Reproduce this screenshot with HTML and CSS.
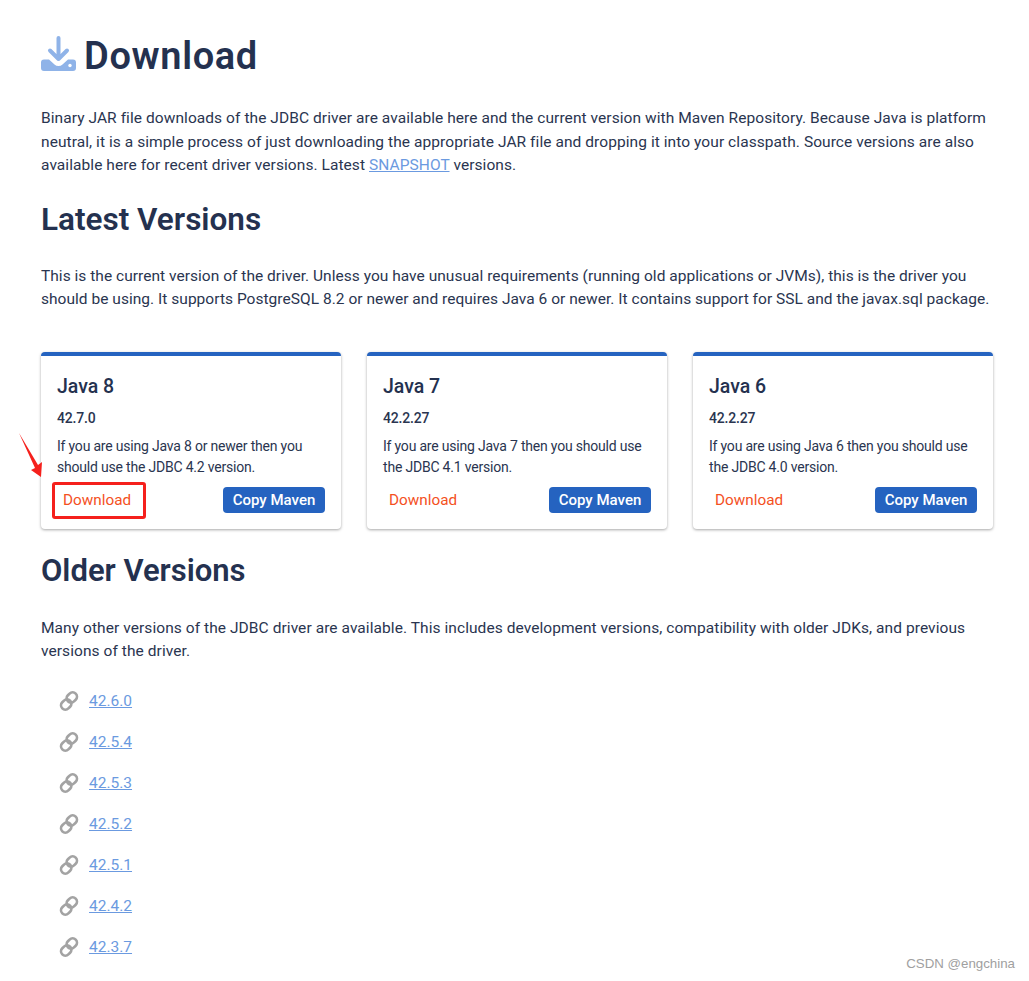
FILE: index.html
```html
<!DOCTYPE html>
<html lang="en">
<head>
    <meta charset="UTF-8">
    <meta name="viewport" content="width=device-width, initial-scale=1.0">
    <title>Download</title>
    <link rel="stylesheet" href="styles.css">
</head>
<body>
    <svg class="icon-defs" aria-hidden="true">
        <symbol id="chain" viewBox="0 0 20 20">
            <g fill="none" stroke="#a3a3a3" stroke-width="2.700">
                <rect x="7.300" y="2.200" width="11" height="8.600" rx="4.300" transform="rotate(-45 12.800 6.500)"/>
                <rect x="1.700" y="9.200" width="11" height="8.600" rx="4.300" transform="rotate(-45 7.200 13.500)"/>
            </g>
        </symbol>
    </svg>
    <div class="container">
        <h1 class="page-title">
            <svg class="title-icon" viewBox="0 0 35 35" width="35" height="35" aria-hidden="true">
                <path d="M17.500 2V23M9 14.500L17.500 23L26 14.500" fill="none" stroke="#8fb3e8" stroke-width="4" stroke-linecap="round" stroke-linejoin="round"/>
                <path d="M3 23.500h5l5.500 5a6 6 0 0 0 8 0l5.500-5h5a3 3 0 0 1 3 3V32a3 3 0 0 1-3 3H3a3 3 0 0 1-3-3v-5.500a3 3 0 0 1 3-3z" fill="#8fb3e8"/>
                <circle cx="29" cy="29.500" r="1.700" fill="#fff"/>
            </svg>
            Download
        </h1>
        <p class="intro">Binary JAR file downloads of the JDBC driver are available here and the current version with Maven Repository. Because Java is platform neutral, it is a simple process of just downloading the appropriate JAR file and dropping it into your classpath. Source versions are also available here for recent driver versions. Latest <a href="#">SNAPSHOT</a> versions.</p>

        <h2>Latest Versions</h2>
        <p class="current">This is the current version of the driver. Unless you have unusual requirements (running old applications or JVMs), this is the driver you should be using. It supports PostgreSQL 8.2 or newer and requires Java 6 or newer. It contains support for SSL and the javax.sql package.</p>

        <div class="cards">
            <div class="card">
                <h3>Java 8</h3>
                <div class="version">42.7.0</div>
                <p>If you are using Java 8 or newer then you should use the JDBC 4.2 version.</p>
                <div class="actions">
                    <a class="download" href="#">Download</a>
                    <button type="button">Copy Maven</button>
                </div>
                <span class="mark-box"></span>
                <svg class="mark-arrow" viewBox="0 0 26 46" width="26" height="46" aria-hidden="true">
                    <path d="M1 0L20 32L24 29L23 44L13 37L17 35z" fill="#f5201c"/>
                </svg>
            </div>
            <div class="card">
                <h3>Java 7</h3>
                <div class="version">42.2.27</div>
                <p>If you are using Java 7 then you should use the JDBC 4.1 version.</p>
                <div class="actions">
                    <a class="download" href="#">Download</a>
                    <button type="button">Copy Maven</button>
                </div>
            </div>
            <div class="card">
                <h3>Java 6</h3>
                <div class="version">42.2.27</div>
                <p>If you are using Java 6 then you should use the JDBC 4.0 version.</p>
                <div class="actions">
                    <a class="download" href="#">Download</a>
                    <button type="button">Copy Maven</button>
                </div>
            </div>
        </div>

        <h2 class="older-title">Older Versions</h2>
        <p class="older">Many other versions of the JDBC driver are available. This includes development versions, compatibility with older JDKs, and previous versions of the driver.</p>

        <ul class="older-list">
            <li><svg class="link-icon" width="20" height="20" aria-hidden="true"><use href="#chain"/></svg><a href="#">42.6.0</a></li>
            <li><svg class="link-icon" width="20" height="20" aria-hidden="true"><use href="#chain"/></svg><a href="#">42.5.4</a></li>
            <li><svg class="link-icon" width="20" height="20" aria-hidden="true"><use href="#chain"/></svg><a href="#">42.5.3</a></li>
            <li><svg class="link-icon" width="20" height="20" aria-hidden="true"><use href="#chain"/></svg><a href="#">42.5.2</a></li>
            <li><svg class="link-icon" width="20" height="20" aria-hidden="true"><use href="#chain"/></svg><a href="#">42.5.1</a></li>
            <li><svg class="link-icon" width="20" height="20" aria-hidden="true"><use href="#chain"/></svg><a href="#">42.4.2</a></li>
            <li><svg class="link-icon" width="20" height="20" aria-hidden="true"><use href="#chain"/></svg><a href="#">42.3.7</a></li>
        </ul>
    </div>
    <div class="watermark">CSDN @engchina</div>
</body>
</html>
```

FILE: styles.css
```css
html, body {
    height: 981px;
    overflow: hidden;
}
body {
    font-family: Roboto, Arial, sans-serif;
    margin: 0;
    padding: 0;
    background: #ffffff;
    color: #2a3550;
    position: relative;
}
.icon-defs {
    display: none;
}
.container {
    width: 952px;
    margin-left: 41px;
    padding-top: 33px;
}
h1, h2, h3, p {
    margin: 0;
}
.page-title {
    display: flex;
    align-items: center;
    gap: 8px;
    font-size: 38px;
    line-height: 46px;
    font-weight: 600;
    color: #24314f;
    letter-spacing: 0.65px;
}
.title-icon {
    flex: none;
    margin-top: -5px;
}
p {
    font-size: 15.500px;
    line-height: 23.500px;
    letter-spacing: 0.07px;
}
.intro {
    margin-top: 28px;
}
a {
    color: #6b9ae0;
}
h2 {
    font-size: 31.500px;
    line-height: 40px;
    font-weight: 600;
    color: #24314f;
    margin-top: 22px;
}
.current {
    margin-top: 25px;
    letter-spacing: 0.03px;
}
.cards {
    display: flex;
    gap: 26px;
    margin-top: 40px;
}
.card {
    position: relative;
    width: 300px;
    height: 177px;
    box-sizing: border-box;
    padding: 18px 16px 0;
    background: #ffffff;
    border-top: 4px solid #2563c0;
    border-radius: 4px;
    box-shadow: 0 1px 3px rgba(0, 0, 0, 0.35);
}
h3 {
    font-size: 19.500px;
    line-height: 26px;
    font-weight: 500;
    color: #24314f;
}
.version {
    font-size: 14px;
    line-height: 18px;
    font-weight: 500;
    letter-spacing: -0.2px;
    margin-top: 9px;
}
.card p {
    font-size: 14px;
    line-height: 21px;
    letter-spacing: -0.2px;
    margin-top: 9px;
}
.actions {
    display: flex;
    justify-content: space-between;
    align-items: center;
    margin-top: 9px;
}
.download {
    color: #f4511e;
    font-size: 15.300px;
    text-decoration: none;
    padding-left: 6px;
}
button {
    font-family: inherit;
    font-size: 15px;
    font-weight: 500;
    width: 102px;
    height: 26px;
    padding: 0;
    background-color: #2563c0;
    color: white;
    border: none;
    border-radius: 4px;
}
.mark-box {
    position: absolute;
    left: 11px;
    top: 126px;
    width: 94px;
    height: 37px;
    box-sizing: border-box;
    border: 3px solid #f5201c;
    border-radius: 3px;
}
.mark-arrow {
    position: absolute;
    left: -23px;
    top: 77px;
}
.older-title {
    margin-top: 22px;
    font-size: 31px;
}
.older {
    margin-top: 26px;
}
.older-list {
    list-style: none;
    margin: 17px 0 0;
    padding: 0 0 0 18px;
}
.older-list li {
    display: flex;
    align-items: center;
    gap: 10px;
    height: 41px;
    font-size: 15.500px;
}
.link-icon {
    flex: none;
}
.watermark {
    position: absolute;
    right: 14px;
    top: 956px;
    font-family: "Liberation Sans", Arial, sans-serif;
    font-size: 13.300px;
    color: #a0a0a0;
}
```
